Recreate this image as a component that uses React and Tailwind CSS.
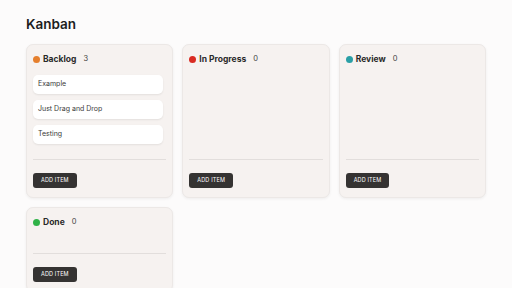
import React from 'react';

const columns = [
  { id: 'backlog', title: 'Backlog', dot: 'bg-[#e57f2d]', items: ['Example', 'Just Drag and Drop', 'Testing'] },
  { id: 'progress', title: 'In Progress', dot: 'bg-[#d92b22]', items: [] },
  { id: 'review', title: 'Review', dot: 'bg-[#2a9fa6]', items: [] },
  { id: 'done', title: 'Done', dot: 'bg-[#2fb247]', items: [] },
];

function Column({ col }) {
  return (
    <div className="flex flex-col rounded-[7px] border border-[#ece8e6] bg-[#f6f2f0] px-[6px] pt-[8px] pb-[9px] shadow-[0_1px_3px_rgba(0,0,0,0.06)]">
      {/* header */}
      <div className="flex h-[12px] items-center">
        <span className={`h-[7px] w-[7px] rounded-full ${col.dot}`} />
        <span className="ml-[3px] text-[8.5px] font-bold text-[#2a2a2a]">{col.title}</span>
        <span className="ml-[7px] text-[7.5px] text-[#444]">{col.items.length}</span>
      </div>

      {/* items */}
      <ul className="mt-[10px] mr-[3px] flex flex-col gap-[6px]">
        {col.items.map((it) => (
          <li
            key={it}
            className="flex h-[19px] items-center rounded-[5px] bg-white px-[5px] text-[7px] text-[#3a3a3a] shadow-[0_1px_2px_rgba(0,0,0,0.08)]"
          >
            {it}
          </li>
        ))}
      </ul>

      <div className="flex-1" />
      <div className="mt-[15px] h-px bg-[#e2dedc]" />

      <div className="mt-[13px] flex">
        <button className="h-[15px] rounded-[3px] bg-[#353332] px-[8px] text-[5.5px] leading-none tracking-wide text-white">
          ADD ITEM
        </button>
      </div>
    </div>
  );
}

export default function App() {
  return (
    <div
      className="min-h-screen bg-[#fcfbfb] px-[26px] pt-[14px]"
      style={{ fontFamily: 'Inter, "Noto Sans", sans-serif' }}
    >
      <h1 className="text-[13.5px] font-semibold leading-[20px] text-[#1d1d1d]">Kanban</h1>

      <div className="mt-[10px] grid grid-cols-3 gap-[9px]">
        {columns.map((c) => (
          <Column key={c.id} col={c} />
        ))}
      </div>
    </div>
  );
}
